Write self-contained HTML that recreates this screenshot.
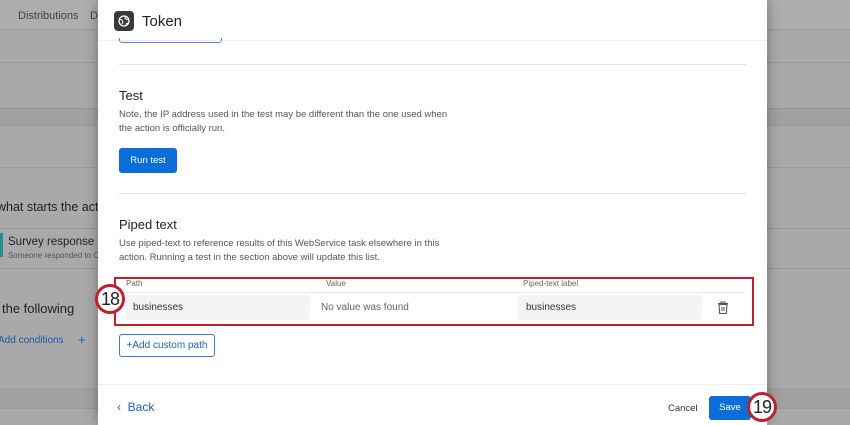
<!DOCTYPE html>
<html><head><style>
*{box-sizing:border-box;margin:0;padding:0}
body{width:850px;height:425px;overflow:hidden;background:#a9a9a9;font-family:"Liberation Sans",sans-serif;position:relative}
.a{position:absolute}
.ln{position:absolute;left:0;width:850px;height:1px;background:#999}
.modal{position:absolute;left:98px;top:0;width:669px;height:425px;background:#fff;box-shadow:0 0 12px rgba(0,0,0,.35)}
.t{position:absolute;color:#333}
.b{position:absolute;width:30px;height:30px;border:3px solid #c0202e;border-radius:50%;background:#fff;color:#222;font-size:18px;text-align:center;line-height:24px;letter-spacing:-1px}
</style></head><body>
<div class="a" style="left:0;top:0;width:850px;height:30px;background:#adadad"></div>
<div class="ln" style="top:29px"></div>
<div class="ln" style="top:62px"></div>
<div class="ln" style="top:108px"></div>
<div class="a" style="left:0;top:109px;width:850px;height:18px;background:#a0a0a0"></div>
<div class="ln" style="top:167px"></div>
<div class="ln" style="top:228px"></div>
<div class="ln" style="top:268px"></div>
<div class="a" style="left:0;top:388px;width:850px;height:20px;background:#a0a0a0"></div>
<div class="ln" style="top:408px"></div>
<div class="t" style="left:18px;top:10px;font-size:11px;color:#444">Distributions</div>
<div class="t" style="left:90px;top:10px;font-size:11px;color:#444">D</div>
<div class="t" style="left:-3px;top:200px;font-size:12.5px;color:#222">what starts the action</div>
<div class="a" style="left:0;top:233px;width:3px;height:24px;background:#2a8a8a"></div>
<div class="t" style="left:8px;top:236px;font-size:11.5px;color:#222">Survey response</div>
<div class="t" style="left:8px;top:251px;font-size:8px;color:#555">Someone responded to C</div>
<div class="t" style="left:2px;top:301px;font-size:13px;color:#222">the following</div>
<div class="t" style="left:-2px;top:335px;font-size:10px;color:#1a5aa8">Add conditions</div>
<div class="t" style="left:78px;top:332px;font-size:13px;color:#1a5aa8">+</div>

<div class="modal">
 <div class="a" style="left:16px;top:11px;width:20px;height:20px;background:#3a3a3a;border-radius:4px"></div>
 <svg class="a" style="left:19px;top:14px" width="14" height="14" viewBox="0 0 14 14"><circle cx="7" cy="7" r="5" fill="none" stroke="#fff" stroke-width="1.3"/><path d="M3 5.5l2 .5 1 2-1 2M8.5 2.5l-.5 2 2 1 1.5-.5M9 12l.5-2.5 2-.5" fill="none" stroke="#fff" stroke-width="1"/></svg>
 <div class="t" style="left:44px;top:13px;font-size:15px;color:#222">Token</div>
 <div class="a" style="left:0;top:40px;width:669px;height:1px;background:#eee"></div>
 <div class="a" style="left:21px;top:38px;width:103px;height:5px;border:1px solid #5a8ad8;border-top:none;border-radius:0 0 3px 3px"></div>
 <div class="a" style="left:21px;top:64px;width:627px;height:1px;background:#e2e2e2"></div>
 <div class="t" style="left:21px;top:88px;font-size:13px;color:#222">Test</div>
 <div class="t" style="left:21px;top:108px;font-size:9.5px;line-height:14px;color:#555;width:340px">Note, the IP address used in the test may be different than the one used when the action is officially run.</div>
 <div class="a" style="left:21px;top:148px;width:58px;height:25px;background:#0b6ed8;border-radius:3px;color:#fff;font-size:9.5px;text-align:center;line-height:25px">Run test</div>
 <div class="a" style="left:21px;top:193px;width:627px;height:1px;background:#e2e2e2"></div>
 <div class="t" style="left:21px;top:217px;font-size:13px;color:#222">Piped text</div>
 <div class="t" style="left:21px;top:237px;font-size:9.5px;line-height:14px;color:#555;width:350px">Use piped-text to reference results of this WebService task elsewhere in this action. Running a test in the section above will update this list.</div>
 <div class="t" style="left:28px;top:279px;font-size:8px;color:#666">Path</div>
 <div class="t" style="left:228px;top:279px;font-size:8px;color:#666">Value</div>
 <div class="t" style="left:425px;top:279px;font-size:8px;color:#666">Piped-text label</div>
 <div class="a" style="left:22px;top:292px;width:625px;height:1px;background:#e6e6e6"></div>
 <div class="a" style="left:27px;top:295px;width:185px;height:25px;background:#f4f4f4;border-radius:3px"></div>
 <div class="t" style="left:35px;top:302px;font-size:10px;color:#333">businesses</div>
 <div class="t" style="left:223px;top:302px;font-size:10px;color:#666">No value was found</div>
 <div class="a" style="left:419px;top:295px;width:185px;height:25px;background:#f4f4f4;border-radius:3px"></div>
 <div class="t" style="left:428px;top:302px;font-size:10px;color:#333">businesses</div>
 <svg class="a" style="left:618px;top:300px" width="14" height="15" viewBox="0 0 14 15"><path d="M2 3.5h10M5 3.5V2h4v1.5M3 4.5l.7 9h6.6l.7-9z" fill="none" stroke="#555" stroke-width="1.1"/><path d="M6 7v4M8 7v4" stroke="#555" stroke-width="1"/></svg>
 <div class="a" style="left:16px;top:277px;width:640px;height:49px;border:2px solid #c0202e"></div>
 <div class="a" style="left:21px;top:334px;width:96px;height:23px;border:1px solid #3a7ad8;border-radius:3px;color:#1a62c8;font-size:10px;text-align:center;line-height:21px">+Add custom path</div>
 <div class="a" style="left:0;top:384px;width:669px;height:1px;background:#eee"></div>
 <div class="t" style="left:19px;top:400px;font-size:12px;color:#1a62c8">‹&nbsp; Back</div>
 <div class="t" style="left:570px;top:403px;font-size:9.5px;color:#333">Cancel</div>
 <div class="a" style="left:611px;top:396px;width:42px;height:24px;background:#0b6ed8;border-radius:3px;color:#fff;font-size:9.5px;text-align:center;line-height:24px">Save</div>
</div>
<div class="b" style="left:95px;top:284px">18</div>
<div class="b" style="left:747px;top:392px">19</div>
</body></html>
